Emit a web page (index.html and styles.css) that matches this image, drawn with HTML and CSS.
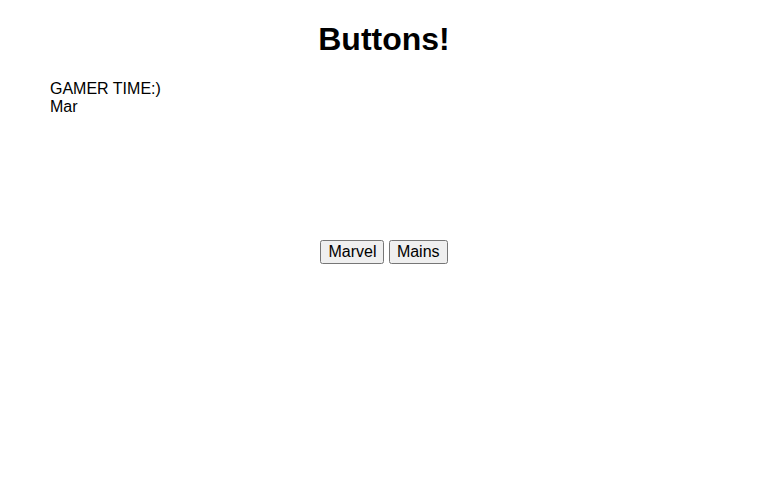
FILE: index.html
```html
<!DOCTYPE html>
<html>
<head>
    <meta charset="UTF-8">
    <meta name="viewport" content="width=device-width, initial-scale=1.0">
    <title>Buttons!</title>
    <link rel="stylesheet" href="styles.css">
</head>
<body>
    <h1 class="title">Buttons!</h1>
    <div class="intro">
        <div>GAMER TIME:)</div>
        <div id="output">Mar</div>
    </div>
    <!-- the two buttons -->
    <div class="button-row">
        <button id="marvelBtn">Marvel</button>
        <button id="mainsBtn">Mains</button>
    </div>
</body>
</html>
```

FILE: styles.css
```css
body {
    font-family: "Liberation Sans", Arial, sans-serif;
    font-size: 16px;
    margin: 0 8px;
    background-color: white;
    color: black;
}
.title {
    text-align: center;
    font-size: 32px;
    margin: 21px 0 22px;
}
.intro {
    padding: 0 42px;
}
.button-row {
    text-align: center;
    margin-top: 124px;
}
button {
    font-family: "Liberation Sans", Arial, sans-serif;
    font-size: 16px;
}
```
